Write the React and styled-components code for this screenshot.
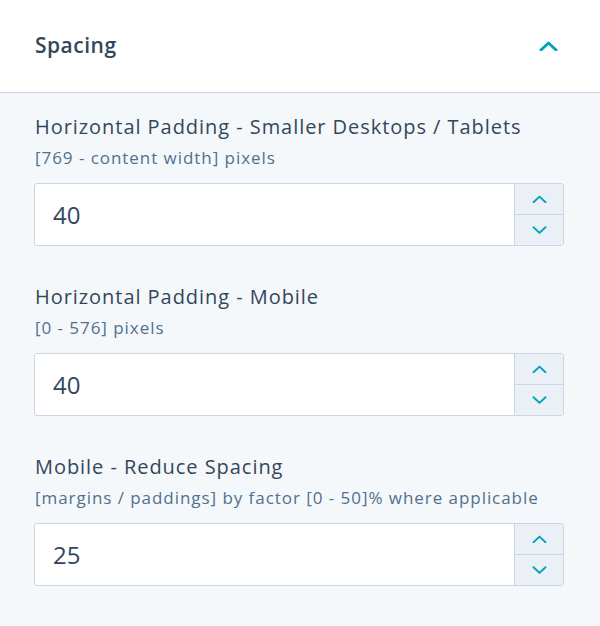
import React from 'react'
import styled, { createGlobalStyle } from 'styled-components'

const GlobalStyle = createGlobalStyle`
    html, body {
        margin: 0;
        padding: 0;
        background: #f5f8fa;
        font-family: 'Open Sans', 'Noto Sans', sans-serif;
    }
`

const Panel = styled.div`
    width: 600px;
    min-height: 626px;
    background: #f5f8fa;
`

const Header = styled.div`
    height: 93px;
    box-sizing: border-box;
    background: #ffffff;
    border-bottom: 1px solid #cbd6e2;
    display: flex;
    align-items: center;
    justify-content: space-between;
    padding: 0 42px 0 35px;
`

const Title = styled.h2`
    margin: 0;
    font-size: 21px;
    font-weight: 600;
    letter-spacing: 0.5px;
    color: #33475b;
    padding-bottom: 2px;
`

const Body = styled.div`
    padding: 20px 36px 0 34px;
    display: flex;
    flex-direction: column;
    gap: 37px;
`

const Field = styled.div`
    display: flex;
    flex-direction: column;
`

const Label = styled.label`
    font-size: 20px;
    line-height: 28px;
    letter-spacing: 0.95px;
    color: #33475b;
    padding-left: 1px;
`

const Help = styled.div`
    font-size: 17px;
    line-height: 22px;
    letter-spacing: 0.95px;
    color: #516f90;
    margin-top: 6px;
    padding-left: 1px;
`

const NumberBox = styled.div`
    margin-top: 14px;
    height: 63px;
    box-sizing: border-box;
    display: flex;
    background: #ffffff;
    border: 1px solid #cbd6e2;
    border-radius: 3px;
    overflow: hidden;
`

const Value = styled.div`
    flex: 1;
    display: flex;
    align-items: center;
    padding-left: 18px;
    font-size: 24px;
    color: #33475b;
`

const Stepper = styled.div`
    width: 48px;
    display: flex;
    flex-direction: column;
    border-left: 1px solid #cbd6e2;
    background: #eaf0f6;
`

const StepButton = styled.div`
    flex: 1;
    display: flex;
    align-items: center;
    justify-content: center;
    border-top: ${(p) => (p.down ? '1px solid #cbd6e2' : 'none')};
`

const Chevron = ({ up, size = 19, stroke = 3 }) => (
    <svg width={size} height={size / 2 + 1} viewBox="0 0 20 11" fill="none">
        <path
            d={up ? 'M2 9.5 L10 2 L18 9.5' : 'M2 1.5 L10 9 L18 1.5'}
            stroke="#00a4bd"
            strokeWidth={stroke}
            strokeLinecap="round"
            strokeLinejoin="round"
        />
    </svg>
)

const fields = [
    {
        label: 'Horizontal Padding - Smaller Desktops / Tablets',
        help: '[769 - content width] pixels',
        value: '40',
    },
    {
        label: 'Horizontal Padding - Mobile',
        help: '[0 - 576] pixels',
        value: '40',
    },
    {
        label: 'Mobile - Reduce Spacing',
        help: '[margins / paddings] by factor [0 - 50]% where applicable',
        value: '25',
    },
]

const App = () => (
    <Panel>
        <GlobalStyle />
        <Header>
            <Title>Spacing</Title>
            <Chevron up />
        </Header>
        <Body>
            {fields.map((f) => (
                <Field key={f.label}>
                    <Label>{f.label}</Label>
                    <Help>{f.help}</Help>
                    <NumberBox>
                        <Value>{f.value}</Value>
                        <Stepper>
                            <StepButton>
                                <Chevron up size={15} stroke={2.6} />
                            </StepButton>
                            <StepButton down>
                                <Chevron size={15} stroke={2.6} />
                            </StepButton>
                        </Stepper>
                    </NumberBox>
                </Field>
            ))}
        </Body>
    </Panel>
)

export default App
